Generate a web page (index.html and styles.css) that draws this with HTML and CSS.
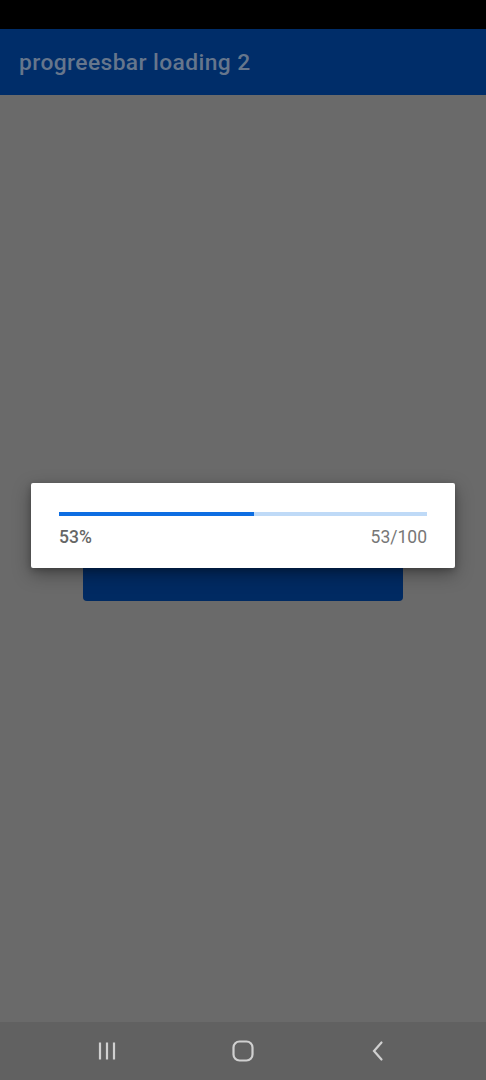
FILE: index.html
```html
<!DOCTYPE html>
<html>
<head>
<meta charset="utf-8">
<link rel="stylesheet" href="styles.css">
</head>
<body>
<div class="screen">
  <div class="status"></div>
  <div class="app">
    <header class="appbar"><span class="title">progreesbar loading 2</span></header>
    <main class="main">
      <div class="button"></div>
    </main>
    <div class="overlay">
      <div class="dialog">
        <div class="track"><div class="fill" style="width:53%"></div></div>
        <div class="labels"><span class="pct">53%</span><span class="count">53/100</span></div>
      </div>
    </div>
  </div>
  <nav class="navbar">
    <svg class="nav-icon" width="24" height="24" viewBox="0 0 24 24"><path d="M5 3.5v17M12 3.5v17M19 3.5v17" stroke="#d0d0d0" stroke-width="2.2" fill="none"/></svg>
    <svg class="nav-icon" width="24" height="24" viewBox="0 0 24 24"><rect x="2.5" y="2.5" width="19" height="19" rx="6" stroke="#d0d0d0" stroke-width="2.2" fill="none"/></svg>
    <svg class="nav-icon" width="24" height="24" viewBox="0 0 24 24"><path d="M15.5 3.5L8 12l7.5 8.5" stroke="#d0d0d0" stroke-width="2.2" fill="none" stroke-linecap="round"/></svg>
  </nav>
</div>
</body>
</html>
```
FILE: styles.css
```css
html, body {
  margin: 0;
  padding: 0;
}
body {
  font-family: Roboto, "Liberation Sans", sans-serif;
  background: #6a6a6a;
}
.screen {
  width: 486px;
  height: 1080px;
  display: flex;
  flex-direction: column;
  overflow: hidden;
}
.status {
  height: 29px;
  background: #000;
  flex: none;
}
.app {
  flex: 1;
  position: relative;
  display: flex;
  flex-direction: column;
}
.appbar {
  height: 66px;
  background: #002d69;
  display: flex;
  align-items: center;
  padding-left: 19px;
  flex: none;
}
.title {
  color: #66768c;
  font-size: 22.8px;
  font-weight: 500;
  letter-spacing: 0.4px;
  margin-top: 1px;
}
.main {
  flex: 1;
  background: #6a6a6a;
  display: flex;
  flex-direction: column;
  align-items: center;
  padding-top: 422px;
}
.button {
  width: 320px;
  height: 84px;
  background: #002a62;
  border-radius: 4px;
}
.overlay {
  position: absolute;
  inset: 0;
  display: flex;
  align-items: center;
  justify-content: center;
}
.dialog {
  width: 424px;
  height: 85px;
  box-sizing: border-box;
  background: #fff;
  border-radius: 2px;
  padding: 29px 28px 0 28px;
  box-shadow: 0 6px 18px rgba(0,0,0,0.35), 0 2px 6px rgba(0,0,0,0.2);
}
.track {
  height: 4px;
  background: #bfdaf7;
}
.fill {
  height: 100%;
  background: #0e6ee2;
}
.labels {
  display: flex;
  justify-content: space-between;
  margin-top: 10px;
  font-size: 17.5px;
  line-height: 22px;
}
.pct {
  font-weight: 500;
  color: #666;
}
.count {
  color: #777;
}
.navbar {
  height: 58px;
  background: #616161;
  flex: none;
  display: flex;
  justify-content: space-between;
  align-items: center;
  padding: 0 96px 0 95px;
}
.nav-icon {
  display: block;
}
```
